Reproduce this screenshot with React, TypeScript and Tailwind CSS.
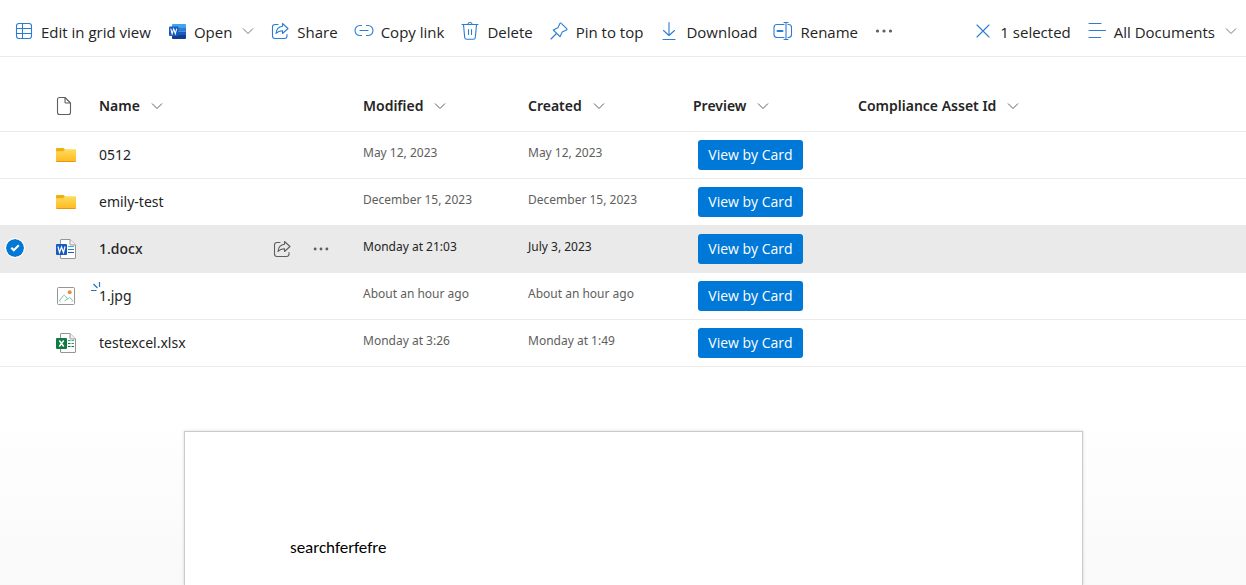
import type { ReactNode } from "react";

type IconProps = { className?: string };

const blue = "h-5 w-5 shrink-0 text-[#2b7cd3]";

function Line({ children, className = blue }: { children: ReactNode; className?: string }) {
  return (
    <svg viewBox="0 0 20 20" className={className} fill="none" stroke="currentColor" strokeWidth="1.1" strokeLinecap="round" strokeLinejoin="round" aria-hidden="true">
      {children}
    </svg>
  );
}

function Chevron({ className = "h-3 w-3 shrink-0 text-[#605e5c]" }: IconProps) {
  return (
    <svg viewBox="0 0 12 12" className={className} fill="none" stroke="currentColor" strokeWidth="1" aria-hidden="true">
      <path d="M1 3.500 6 8.500 11 3.500" />
    </svg>
  );
}

const GridIcon = () => (
  <Line>
    <rect x="2.5" y="2.5" width="15" height="15" rx="2.5" />
    <path d="M8.500 2.500v15M2.500 7.500h15M2.500 12.500h15" />
  </Line>
);

const ShareIcon = ({ className }: IconProps) => (
  <Line className={className}>
    <path d="M8 3.500H5A2.500 2.500 0 0 0 2.500 6v9A2.500 2.500 0 0 0 5 17.500h9.500a2.500 2.500 0 0 0 2.500-2.500v-1.500" />
    <path d="M12.500 2.500 18 7.500l-5.500 5V9.700c-3 0-4.800.8-6.500 2.800.3-4 2.700-6.700 6.500-7.200z" />
  </Line>
);

const LinkIcon = () => (
  <Line>
    <path d="M7.500 4.500H6a4.500 4.500 0 0 0 0 10h1.500M12.500 4.500H14a4.500 4.500 0 0 1 0 10h-1.500M6 9.500h8" />
  </Line>
);

const TrashIcon = () => (
  <Line>
    <path d="M2 3.500h16M8 3.500a2 2 0 0 1 4 0M3.500 3.500l1.200 13a2 2 0 0 0 2 1.800h6.600a2 2 0 0 0 2-1.800l1.200-13M8.500 8.500v5M11.500 8.500v5" />
  </Line>
);

const PinIcon = () => (
  <Line>
    <path d="M12.300 2.300 17.700 7.700c.5.500.3 1.200-.3 1.400l-4.200 2-2.200 4.600-6.700-6.700 4.600-2.200 2-4.200c.3-.6 1-.8 1.400-.3zM7.500 12.500 2 18" />
  </Line>
);

const DownloadIcon = () => (
  <Line>
    <path d="M10 1.500v13M4.500 9.500l5.500 5 5.500-5M4 18.500h12" />
  </Line>
);

const RenameIcon = () => (
  <Line>
    <path d="M11 3.500H4A3 3 0 0 0 1 6.500v7a3 3 0 0 0 3 3h7M15 3.500h.5a3 3 0 0 1 3 3v7a3 3 0 0 1-3 3H15" />
    <path d="M13 1.500v17M11 1.500h4M11 18.500h4" />
    <path d="M4.500 10h5" strokeWidth="2" />
  </Line>
);

const MoreIcon = ({ className = "h-5 w-5 text-[#605e5c]" }: IconProps) => (
  <svg viewBox="0 0 20 20" className={className} fill="currentColor" aria-hidden="true">
    <circle cx="3.500" cy="10" r="1.600" />
    <circle cx="10" cy="10" r="1.600" />
    <circle cx="16.500" cy="10" r="1.600" />
  </svg>
);

const CloseIcon = () => (
  <Line>
    <path d="M4 4l12 12M16 4 4 16" />
  </Line>
);

const ViewIcon = () => (
  <Line>
    <path d="M2 2.500h12M2 9.500h16.500M2 16.500h11.500" />
  </Line>
);

const WordApp = () => (
  <svg viewBox="0 0 20 20" className="h-5 w-5 shrink-0" aria-hidden="true">
    <path d="M6 3h12a1 1 0 0 1 1 1v3H5V4a1 1 0 0 1 1-1z" fill="#41a5ee" />
    <path d="M5 6.800h14v3.700H5z" fill="#2b7cd3" />
    <path d="M5 10.500h14V14H5z" fill="#185abd" />
    <path d="M5 14h14v3a1 1 0 0 1-1 1H6a1 1 0 0 1-1-1z" fill="#103f91" />
    <rect x="2" y="5.500" width="9.500" height="9.500" rx="1" fill="#185abd" />
    <path d="m3.800 7.700 1.300 5 1.600-4.800 1.600 4.800 1.400-5" fill="none" stroke="#fff" strokeWidth="1.100" />
  </svg>
);

const FileIcon = () => (
  <Line className="h-5 w-5 text-[#605e5c]">
    <path d="M5.500 1.500H11l5.500 5.500v9.500a2 2 0 0 1-2 2h-9a2 2 0 0 1-2-2v-13a2 2 0 0 1 2-2zM11 1.500V6a1 1 0 0 0 1 1h4.500" />
  </Line>
);

const FolderIcon = () => (
  <svg viewBox="0 0 20 20" className="h-5 w-5" aria-hidden="true">
    <defs>
      <linearGradient id="folder" x1="0" y1="0" x2="0" y2="1">
        <stop offset="0" stopColor="#ffdc5c" />
        <stop offset="1" stopColor="#ffb920" />
      </linearGradient>
    </defs>
    <path d="M0 4a1 1 0 0 1 1-1h6.500l2 2-2 2H0z" fill="#f0ad10" />
    <path d="M0 6.200h7l2-2H19a1 1 0 0 1 1 1V16a1 1 0 0 1-1 1H1a1 1 0 0 1-1-1z" fill="url(#folder)" />
    <path d="M.3 16.200h19.400a1 1 0 0 1-.7.800H1a1 1 0 0 1-.7-.8z" fill="#dc8a10" />
  </svg>
);

function Sheet({ children }: { children: ReactNode }) {
  return (
    <svg viewBox="0 0 20 20" className="h-5 w-5" aria-hidden="true">
      <path d="M5 .5h9l5.500 5.500v13a.5.500 0 0 1-.5.500H5a.5.500 0 0 1-.5-.5V1a.5.500 0 0 1 .5-.5z" fill="#fff" stroke="#979593" />
      <path d="M14 .5V5.500a.5.500 0 0 0 .5.500h5" fill="#f3f2f1" stroke="#979593" />
      {children}
    </svg>
  );
}

const DocxIcon = () => (
  <Sheet>
    <path d="M12 7.500h6" stroke="#41a5ee" />
    <path d="M12 10.500h6" stroke="#2b7cd3" />
    <path d="M12 13.500h6" stroke="#185abd" />
    <rect x="0" y="5" width="11" height="11" rx="1" fill="#185abd" />
    <path d="m2 7.500 1.500 6 2-5.500 2 5.500L9 7.500" fill="none" stroke="#fff" strokeWidth="1.200" />
  </Sheet>
);

const XlsxIcon = () => (
  <Sheet>
    <path d="M12 7.500h2.500" stroke="#21a366" />
    <path d="M15.500 7.500H18" stroke="#33c481" />
    <path d="M12 10.500h2.500" stroke="#107c41" />
    <path d="M15.500 10.500H18" stroke="#21a366" />
    <path d="M12 13.500h2.500" stroke="#185c37" />
    <path d="M15.500 13.500H18" stroke="#107c41" />
    <rect x="0" y="5" width="11" height="11" rx="1" fill="#107c41" />
    <path d="m3.300 7.500 4.400 6M7.700 7.500l-4.400 6" stroke="#fff" strokeWidth="1.500" />
  </Sheet>
);

const JpgIcon = () => (
  <svg viewBox="0 0 20 20" className="h-5 w-5" fill="none" aria-hidden="true">
    <rect x="1.500" y="1.500" width="17" height="17" rx="1" fill="#fff" stroke="#979593" />
    <circle cx="13.700" cy="6.200" r="1.900" fill="#ed8733" />
    <path d="M4.500 15.500c-.9 0-1.200-.9-.6-1.500l3.500-4.300c.5-.6 1.100-.6 1.600 0l2.700 3.300 1.100-1c.5-.5 1-.5 1.500 0l2 2.200c.5.600.2 1.300-.6 1.300M8.500 15l3.200-2" stroke="#7cbfa9" />
  </svg>
);

const SparkIcon = () => (
  <svg viewBox="0 0 10 10" className="absolute -left-2 -top-1 h-[10px] w-[10px]" stroke="#1b76c4" strokeWidth="1.200" aria-hidden="true">
    <path d="M8.500 0v5M2.500 2l4 4M0 8.500h5.500" />
  </svg>
);

function ToolButton({ icon, label, menu }: { icon: ReactNode; label: string; menu?: boolean }) {
  return (
    <button type="button" className="flex shrink-0 items-center gap-[7px] whitespace-nowrap">
      {icon}
      <span className="pt-[3px]">{label}</span>
      {menu && <Chevron className="ml-[3px] h-3 w-3 shrink-0 text-[#797775]" />}
    </button>
  );
}

const rows = [
  { name: "0512", icon: <FolderIcon />, modified: "May 12, 2023", created: "May 12, 2023" },
  { name: "emily-test", icon: <FolderIcon />, modified: "December 15, 2023", created: "December 15, 2023" },
  { name: "1.docx", icon: <DocxIcon />, modified: "Monday at 21:03", created: "July 3, 2023", selected: true },
  { name: "1.jpg", icon: <JpgIcon />, modified: "About an hour ago", created: "About an hour ago", fresh: true },
  { name: "testexcel.xlsx", icon: <XlsxIcon />, modified: "Monday at 3:26", created: "Monday at 1:49" },
];

const columns = ["Name", "Modified", "Created", "Preview", "Compliance Asset Id"];

export default function App() {
  return (
    <div className="flex min-h-screen flex-col bg-white font-['Noto_Sans','Open_Sans',sans-serif] text-[#242424]">
      <header className="flex h-[57px] items-center justify-between border-b border-[#edebe9] pl-[14px] pr-[9px] pt-[5px] font-['Open_Sans','Noto_Sans',sans-serif] text-[15px] leading-5">
        <div className="flex items-center gap-4">
          <ToolButton icon={<GridIcon />} label="Edit in grid view" />
          <ToolButton icon={<WordApp />} label="Open" menu />
          <ToolButton icon={<ShareIcon />} label="Share" />
          <ToolButton icon={<LinkIcon />} label="Copy link" />
          <ToolButton icon={<TrashIcon />} label="Delete" />
          <ToolButton icon={<PinIcon />} label="Pin to top" />
          <ToolButton icon={<DownloadIcon />} label="Download" />
          <ToolButton icon={<RenameIcon />} label="Rename" />
          <button type="button" aria-label="More">
            <MoreIcon />
          </button>
        </div>
        <div className="flex items-center gap-4">
          <ToolButton icon={<CloseIcon />} label="1 selected" />
          <ToolButton icon={<ViewIcon />} label="All Documents" menu />
        </div>
      </header>

      <table className="mt-6 w-full table-fixed border-collapse text-left">
        <colgroup>
          <col className="w-[54px]" />
          <col className="w-[45px]" />
          <col className="w-[264px]" />
          <col className="w-[165px]" />
          <col className="w-[165px]" />
          <col className="w-[165px]" />
          <col />
        </colgroup>
        <thead>
          <tr className="h-[50px] border-b border-[#edebe9]">
            <th />
            <th className="font-normal">
              <FileIcon />
            </th>
            {columns.map((c) => (
              <th key={c} className="p-0 text-[14px] font-semibold leading-5">
                <button type="button" className="flex items-center gap-[11px] whitespace-nowrap">
                  {c}
                  <Chevron />
                </button>
              </th>
            ))}
          </tr>
        </thead>
        <tbody>
          {rows.map((r) => (
            <tr key={r.name} className={r.selected ? "h-[47px] border-b border-[#eaeaea] bg-[#eaeaea]" : "h-[47px] border-b border-[#edebe9]"}>
              <td className="p-0 pb-[2px] pl-[6px]">
                {r.selected && (
                  <label className="relative block h-[18px] w-[18px]">
                    <input type="checkbox" defaultChecked aria-label="Select 1.docx" className="block h-[18px] w-[18px] appearance-none rounded-full bg-[#0078d4] outline outline-white" />
                    <svg viewBox="0 0 18 18" className="pointer-events-none absolute inset-0 h-[18px] w-[18px]" fill="none" stroke="#fff" strokeWidth="2" aria-hidden="true">
                      <path d="m5.300 8.800 2.500 2.500 5-5" />
                    </svg>
                  </label>
                )}
              </td>
              <td className="p-0 pl-[2px]">{r.icon}</td>
              <td className="p-0 text-[14px] leading-5">
                <div className="flex items-center">
                  <a href="#" className={r.selected ? "relative font-medium" : "relative"}>
                    {r.fresh && <SparkIcon />}
                    {r.name}
                  </a>
                  {r.selected && (
                    <div className="ml-auto mr-[33px] flex items-center gap-5">
                      <button type="button" aria-label="Share">
                        <ShareIcon className="block h-5 w-5 text-[#605e5c]" />
                      </button>
                      <button type="button" aria-label="More actions">
                        <MoreIcon className="block h-[18px] w-[18px] text-[#605e5c]" />
                      </button>
                    </div>
                  )}
                </div>
              </td>
              <td className={r.selected ? "p-0 pb-[3px] text-[12px] leading-4" : "p-0 pb-[3px] text-[12px] leading-4 text-[#605e5c]"}>{r.modified}</td>
              <td className={r.selected ? "p-0 pb-[3px] text-[12px] leading-4" : "p-0 pb-[3px] text-[12px] leading-4 text-[#605e5c]"}>{r.created}</td>
              <td className="p-0 pl-[5px]">
                <button type="button" className="block h-[30px] w-[105px] rounded-[3px] bg-[#0078d7] pt-px font-['Open_Sans','Noto_Sans',sans-serif] text-[14px] leading-5 text-white">
                  View by Card
                </button>
              </td>
              <td />
            </tr>
          ))}
        </tbody>
      </table>

      <main className="flex flex-1 flex-col bg-linear-to-b from-white from-20% to-[#faf9f9] pl-[184px] pr-[163px] pt-16">
        <article className="flex-1 border border-b-0 border-[#c8cccf] bg-white pl-[105px] pt-[104px] shadow-[0_0_3px_rgba(0,0,0,0.15)]">
          <p className="font-['Carlito','Lato',sans-serif] text-[17px] leading-6 text-black">searchferfefre</p>
        </article>
      </main>
    </div>
  );
}
